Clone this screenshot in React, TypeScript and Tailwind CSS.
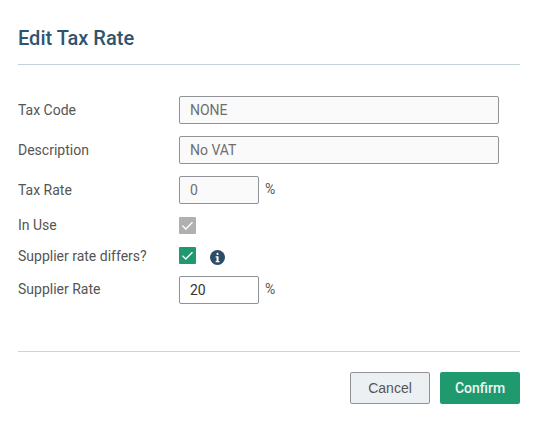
const Check = () => (
    <svg viewBox="0 0 17 17" className="w-[17px] h-[17px]" fill="none">
        <path d="M3.5 8.8l3.3 3.2 6.7-6.8" stroke="white" strokeWidth="1.4" />
    </svg>
);

const Input = ({ value, width, disabled = true }: { value: string; width: string; disabled?: boolean }) => (
    <div
        className={`${width} h-7 flex items-center px-[10px] rounded-[2px] border border-[#8f9296] text-sm ${
            disabled ? 'bg-[#fafafa] text-[#6f6f6f]' : 'bg-white text-[#333]'
        }`}
    >
        {value}
    </div>
);

const Label = ({ children, raised = false }: { children: string; raised?: boolean }) => (
    <div className={`w-[161px] shrink-0 text-sm text-[#555] ${raised ? '-mt-[2px]' : ''}`}>{children}</div>
);

export default function App() {
    return (
        <div className="w-[534px] h-[424px] bg-white pl-[18px] pr-[14px] font-['Roboto',sans-serif] overflow-hidden">
            <h2 className="pt-[26px] h-[65px] text-xl leading-[24px] font-medium text-[#2f5470] border-b border-[#c3d2d9]">
                Edit Tax Rate
            </h2>

            <div className="pt-[31px] flex flex-col h-[287px] border-b border-[#cfd3d6]">
                <div className="flex items-center h-7">
                    <Label>Tax Code</Label>
                    <Input value="NONE" width="w-80" />
                </div>
                <div className="flex items-center h-7 mt-3">
                    <Label>Description</Label>
                    <Input value="No VAT" width="w-80" />
                </div>
                <div className="flex items-center h-7 mt-3">
                    <Label>Tax Rate</Label>
                    <Input value="0" width="w-20" />
                    <span className="ml-[6px] -mt-[2px] text-sm text-[#555]">%</span>
                </div>
                <div className="flex items-center h-[17px] mt-[13px]">
                    <Label raised>In Use</Label>
                    <div className="w-[17px] h-[17px] bg-[#b0b0b0] rounded-[1px]">
                        <Check />
                    </div>
                </div>
                <div className="flex items-center h-[17px] mt-[13px]">
                    <Label>Supplier rate differs?</Label>
                    <div className="w-[17px] h-[17px] bg-[#1f9a6f] rounded-[1px]">
                        <Check />
                    </div>
                    <svg viewBox="0 0 16 16" className="w-[15px] h-[15px] ml-[14px] mt-[3px]">
                        <circle cx="8" cy="8" r="8" fill="#2c4d68" />
                        <rect x="6.9" y="3" width="2.2" height="2.2" rx="1" fill="white" />
                        <path d="M6 6.7h3.1v5h1v1.3H6v-1.3h1v-3.7H6z" fill="white" />
                    </svg>
                </div>
                <div className="flex items-center h-7 mt-3">
                    <Label raised>Supplier Rate</Label>
                    <Input value="20" width="w-20" disabled={false} />
                    <span className="ml-[6px] -mt-[2px] text-sm text-[#555]">%</span>
                </div>
            </div>

            <div className="flex justify-end gap-[10px] pt-[20px]">
                <button className="w-20 h-8 rounded-[2px] border border-[#8f9296] bg-[#edf0f3] text-sm text-[#555] font-['Liberation_Sans',sans-serif]">
                    Cancel
                </button>
                <button className="w-20 h-8 rounded-[2px] bg-[#1f9a6f] text-sm font-medium text-[#eef8f4]">
                    Confirm
                </button>
            </div>
        </div>
    );
}
